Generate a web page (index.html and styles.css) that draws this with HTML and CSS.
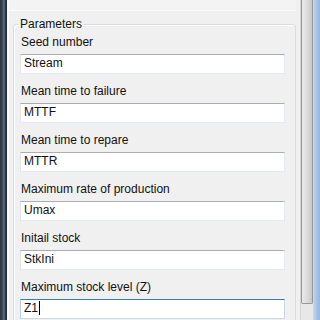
FILE: index.html
```html
<!DOCTYPE html>
<html>
  <head>
    <title>Parameters</title>
    <link rel="stylesheet" href="styles.css">
  </head>
  <body>
    <div class="window">
      <div class="frame-left"></div>
      <div class="client">
        <div class="content">
          <div class="top-strip"></div>
          <fieldset class="group">
            <legend>Parameters</legend>

            <div class="field">
              <label>Seed number</label>
              <div class="input">Stream</div>
            </div>
            <div class="field">
              <label>Mean time to failure</label>
              <div class="input">MTTF</div>
            </div>
            <div class="field">
              <label>Mean time to repare</label>
              <div class="input">MTTR</div>
            </div>
            <div class="field">
              <label>Maximum rate of production</label>
              <div class="input">Umax</div>
            </div>
            <div class="field">
              <label>Initail stock</label>
              <div class="input">StkIni</div>
            </div>
            <div class="field">
              <label>Maximum stock level (Z)</label>
              <div class="input focused">Z1<span class="caret"></span></div>
            </div>
          </fieldset>
        </div>
        <div class="scrollbar">
          <div class="thumb"></div>
        </div>
      </div>
      <div class="frame-right"></div>
    </div>
  </body>
</html>
```

FILE: styles.css
```css
* {
  margin: 0;
  padding: 0;
  box-sizing: border-box;
}

body {
  font-family: 'Liberation Sans', Arial, sans-serif;
  font-size: 12px;
  color: #111;
  width: 320px;
  height: 320px;
  overflow: hidden;
  background: #f0f0f0;
}

.window {
  display: flex;
  width: 320px;
  height: 320px;
}

.frame-left {
  width: 7px;
  background: linear-gradient(90deg, #27323d 0%, #3b4c5e 40%, #5d7895 55%, #2f3b48 75%, #1f2731 100%);
}

.frame-right {
  width: 7px;
  background: linear-gradient(90deg, #c9d9ec 0%, #a9c4e4 50%, #95b6dc 100%);
}

.client {
  flex: 1;
  display: flex;
  border-left: 2px solid #fafafa;
  background: #f0f0f0;
}

.content {
  flex: 1;
  display: flex;
  flex-direction: column;
  padding-right: 4px;
  overflow: hidden;
}

.top-strip {
  flex: none;
  height: 11px;
  background: #f3f3f3;
  border-bottom: 1px solid #fcfcfc;
}

.group {
  flex: none;
  margin: 5px 0 0 4px;
  padding: 2px 10px 0 6px;
  border: 1px solid #d5dfe5;
  border-radius: 3px;
  box-shadow: inset 1px 1px 0 #fff;
  min-width: 0;
}

.group legend {
  line-height: 16px;
  padding: 0 2px;
  margin-left: -2px;
}

.field {
  display: flex;
  flex-direction: column;
  gap: 4px;
  margin-bottom: 9px;
}

.field label {
  line-height: 16px;
  padding-left: 1px;
}

.input {
  height: 20px;
  line-height: 16px;
  padding: 0 3px 2px;
  background: #fff;
  border: 1px solid #e3e9ef;
  border-top-color: #abadb3;
  border-left-color: #e2e3ea;
}

.input.focused {
  border-color: #c5daed;
  border-top-color: #3d7bad;
  border-left-color: #b5cfe7;
}

.caret {
  display: inline-block;
  width: 1px;
  height: 14px;
  margin-left: 1px;
  vertical-align: -3px;
  background: #000;
}

.scrollbar {
  width: 13px;
  background: #e8e8e8;
  border-left: 1px solid #d4d4d4;
}

.thumb {
  height: 304px;
  background: linear-gradient(90deg, #eaeaea 0%, #dcdcdc 50%, #c8c8c8 100%);
  border: 1px solid #979797;
  border-top: none;
  border-radius: 0 0 2px 2px;
}
```
